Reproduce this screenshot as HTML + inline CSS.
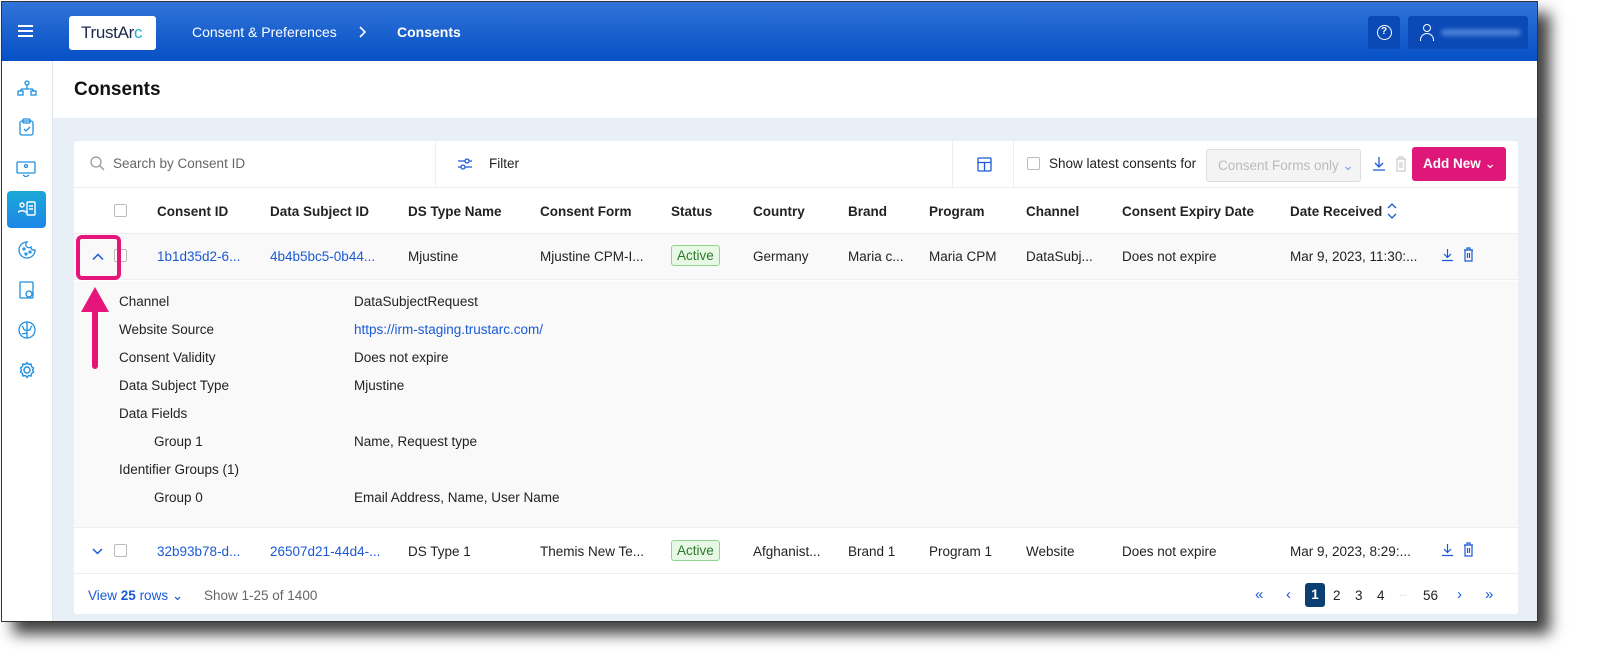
<!DOCTYPE html>
<html><head><meta charset="utf-8"><style>
*{box-sizing:border-box;margin:0;padding:0}
body{width:1600px;height:664px;background:#fff;font-family:"Liberation Sans",sans-serif;font-size:13.5px;color:#222;position:relative;overflow:hidden}
.win{position:absolute;left:1px;top:1px;width:1537px;height:621px;background:#e9eff7;border:1px solid #333;box-shadow:12px 12px 14px rgba(0,0,0,.75);overflow:hidden}
.hdr{position:absolute;left:0;top:0;right:0;height:59px;background:linear-gradient(#3274d8,#0550c6)}
.side{position:absolute;left:0;top:59px;width:51px;bottom:0;background:#fff;border-right:1px solid #e0e6ef}
.titlebar{position:absolute;left:51px;top:59px;right:0;height:57px;background:#fff}
.card{position:absolute;left:72px;top:139px;width:1444px;height:473px;background:#fff;border-radius:3px}
.abs{position:absolute}
.lnk{color:#1a5ad6}
.row{position:absolute;left:0;right:0}
.cell{position:absolute;white-space:nowrap}
.cb{position:absolute;width:13px;height:13px;border:1px solid #bbb;border-radius:2px;background:#fff}
.badge{position:absolute;border:1px solid #8fd48f;background:#e7f8e5;color:#2b7a2b;border-radius:3px;padding:2px 5px;font-size:13.5px}
</style></head><body>
<div class="win">
 <div class="hdr">
  <div class="abs" style="left:16px;top:23px;width:15px;height:2px;background:#fff;box-shadow:0 5px 0 #fff,0 10px 0 #fff"></div>
  <div class="abs" style="left:67px;top:14px;width:87px;height:34px;background:#fff;border-radius:3px;font-size:17px;color:#1b2a4a;padding:7px 0 0 12px;letter-spacing:-.3px">TrustAr<span style="color:#16b5c9">c</span></div>
  <div class="abs" style="left:190px;top:22px;color:#fff;font-size:14px">Consent &amp; Preferences</div>
  <svg class="abs" style="left:357px;top:24px" width="8" height="12" fill="none" stroke="#fff" stroke-width="1.6"><path d="M1 1l5 5-5 5"/></svg>
  <div class="abs" style="left:395px;top:22px;color:#fff;font-size:14px;font-weight:bold">Consents</div>
  <div class="abs" style="left:1366px;top:14px;width:32px;height:33px;background:#0a49b6;border-radius:3px"><div style="margin:9px auto;width:15px;height:15px;border:1.5px solid #fff;border-radius:50%;color:#fff;font-size:10px;text-align:center;line-height:12px;font-weight:bold">?</div></div>
  <div class="abs" style="left:1406px;top:14px;width:120px;height:33px;background:#0a49b6;border-radius:3px">
   <div class="abs" style="left:15px;top:8px;width:8px;height:8px;border:1.5px solid #fff;border-radius:50%"></div>
   <div class="abs" style="left:12px;top:17px;width:14px;height:8px;border:1.5px solid #fff;border-bottom:none;border-radius:7px 7px 0 0"></div>
   <div class="abs" style="left:33px;top:13px;width:80px;height:7px;background:#4a7fd6;border-radius:4px;filter:blur(2px)"></div>
  </div>
 </div>
 <div class="side">
  <svg class="abs" style="left:15px;top:19px" width="20" height="16" fill="none" stroke="#1d8fe0" stroke-width="1.3"><circle cx="10" cy="3" r="2"/><path d="M10 5v4M4 9h12M4 9v2M16 9v2"/><rect x="1" y="11" width="5" height="4"/><rect x="14" y="11" width="5" height="4"/></svg>
  <svg class="abs" style="left:17px;top:57px" width="16" height="18" fill="none" stroke="#1d8fe0" stroke-width="1.3"><rect x="1" y="3" width="13" height="14" rx="2"/><rect x="4" y="1" width="7" height="4" rx="1"/><path d="M5 11l2 2 4-4"/></svg>
  <svg class="abs" style="left:14px;top:100px" width="20" height="16" fill="none" stroke="#1d8fe0" stroke-width="1.3"><rect x="1" y="1" width="18" height="11" rx="1"/><circle cx="10" cy="5" r="1.5"/><path d="M7 14l3 2 3-2"/></svg>
  <div class="abs" style="left:5px;top:130px;width:39px;height:37px;border-radius:4px;background:linear-gradient(#19a9d6,#1f86e8)"><svg style="margin:10px 0 0 11px" width="18" height="16" fill="none" stroke="#fff" stroke-width="1.4"><circle cx="4" cy="4" r="2"/><path d="M0 12c0-3 8-3 8 0"/><rect x="9" y="1" width="8" height="13" rx="1"/><path d="M11 5h4M11 8h4"/></svg></div>
  <svg class="abs" style="left:16px;top:180px" width="18" height="18" fill="none" stroke="#1d8fe0" stroke-width="1.3"><path d="M9 1a8 8 0 1 0 8 8 3 3 0 0 1-4-3 3 3 0 0 1-4-5z"/><circle cx="6" cy="8" r="1"/><circle cx="8" cy="13" r="1"/><circle cx="12" cy="11" r="1"/></svg>
  <svg class="abs" style="left:17px;top:220px" width="16" height="19" fill="none" stroke="#1d8fe0" stroke-width="1.3"><rect x="1" y="1" width="13" height="16" rx="1"/><circle cx="10" cy="13" r="3"/></svg>
  <svg class="abs" style="left:16px;top:260px" width="18" height="18" fill="none" stroke="#1d8fe0" stroke-width="1.3"><circle cx="9" cy="9" r="8"/><path d="M9 1v16M4 5c3 2 0 5 5 4M14 5c-3 2 0 5-5 4M4 13c2-1 3 0 5-1"/></svg>
  <svg class="abs" style="left:16px;top:300px" width="18" height="18" fill="none" stroke="#1d8fe0" stroke-width="1.4"><circle cx="9" cy="9" r="3"/><path d="M9 1.5l1.5 2 2.5-.5.5 2.5 2 1.5-1 2 1 2-2 1.5-.5 2.5-2.5-.5-1.5 2-1.5-2-2.5.5-.5-2.5-2-1.5 1-2-1-2 2-1.5.5-2.5 2.5.5z"/></svg>
 </div>
 <div class="titlebar"><div class="abs" style="left:21px;top:18px;font-size:19px;font-weight:bold;color:#111">Consents</div></div>
 <div class="card">
  <div class="row" style="top:0;height:47px;border-bottom:1px solid #eee">
   <svg class="abs" style="left:16px;top:15px" width="15" height="15" fill="none" stroke="#999" stroke-width="1.3"><circle cx="6" cy="6" r="5"/><path d="M10 10l4 4"/></svg>
   <div class="cell" style="left:39px;top:15px;color:#666">Search by Consent ID</div>
   <div class="abs" style="left:361px;top:0;width:1px;height:47px;background:#eee"></div>
   <svg class="abs" style="left:383px;top:16px" width="16" height="14" fill="none" stroke="#1a5ad6" stroke-width="1.3"><path d="M1 4h14M1 10h14"/><circle cx="10" cy="4" r="2" fill="#fff"/><circle cx="6" cy="10" r="2" fill="#fff"/></svg>
   <div class="cell" style="left:415px;top:15px">Filter</div>
   <div class="abs" style="left:878px;top:0;width:1px;height:47px;background:#eee"></div>
   <svg class="abs" style="left:903px;top:16px" width="15" height="15" fill="none" stroke="#1a5ad6" stroke-width="1.3"><rect x="1" y="1" width="13" height="13" rx="1"/><path d="M1 5.5h13M7.5 5.5v8.5"/></svg>
   <div class="abs" style="left:939px;top:0;width:1px;height:47px;background:#eee"></div>
   <div class="cb" style="left:953px;top:16px"></div>
   <div class="cell" style="left:975px;top:15px">Show latest consents for</div>
   <div class="abs" style="left:1132px;top:8px;width:155px;height:33px;border:1px solid #ddd;background:#f4f4f4;border-radius:3px;color:#bbb;padding:8px 0 0 11px">Consent Forms only <span style="color:#7aa3e5">⌄</span></div>
   <svg class="abs" style="left:1298px;top:15px" width="14" height="16" fill="none" stroke="#1a5ad6" stroke-width="1.3"><path d="M7 1v10M3 7l4 4 4-4M1 14h12"/></svg>
   <svg class="abs" style="left:1321px;top:15px" width="12" height="16" fill="none" stroke="#ccc" stroke-width="1.2"><path d="M1 3h10M4 3V1h4v2M2 3v12h8V3M5 6v6M7 6v6"/></svg>
   <div class="abs" style="left:1338px;top:6px;width:94px;height:34px;background:#e0177a;border-radius:3px;color:#fff;font-weight:bold;padding:9px 0 0 11px">Add New <span style="font-weight:normal">⌄</span></div>
  </div>
  <div class="row" style="top:48px;height:45px;border-bottom:1px solid #eee;font-weight:bold">
   <div class="cb" style="left:40px;top:15px"></div>
   <div class="cell" style="left:83px;top:15px">Consent ID</div>
   <div class="cell" style="left:196px;top:15px">Data Subject ID</div>
   <div class="cell" style="left:334px;top:15px">DS Type Name</div>
   <div class="cell" style="left:466px;top:15px">Consent Form</div>
   <div class="cell" style="left:597px;top:15px">Status</div>
   <div class="cell" style="left:679px;top:15px">Country</div>
   <div class="cell" style="left:774px;top:15px">Brand</div>
   <div class="cell" style="left:855px;top:15px">Program</div>
   <div class="cell" style="left:952px;top:15px">Channel</div>
   <div class="cell" style="left:1048px;top:15px">Consent Expiry Date</div>
   <div class="cell" style="left:1216px;top:15px">Date Received</div>
   <svg class="abs" style="left:1313px;top:13px" width="10" height="18" fill="none" stroke="#1a5ad6" stroke-width="1.3"><path d="M1 6l4-4 4 4M1 12l4 4 4-4"/></svg>
  </div>
  <div class="row" style="top:93px;height:46px;background:#f9f9f9;border-bottom:1px solid #eee">
   <div class="cb" style="left:40px;top:15px"></div>
   <div class="cell lnk" style="left:83px;top:15px">1b1d35d2-6...</div>
   <div class="cell lnk" style="left:196px;top:15px">4b4b5bc5-0b44...</div>
   <div class="cell" style="left:334px;top:15px">Mjustine</div>
   <div class="cell" style="left:466px;top:15px">Mjustine CPM-I...</div>
   <div class="badge" style="left:597px;top:11px">Active</div>
   <div class="cell" style="left:679px;top:15px">Germany</div>
   <div class="cell" style="left:774px;top:15px">Maria c...</div>
   <div class="cell" style="left:855px;top:15px">Maria CPM</div>
   <div class="cell" style="left:952px;top:15px">DataSubj...</div>
   <div class="cell" style="left:1048px;top:15px">Does not expire</div>
   <div class="cell" style="left:1216px;top:15px">Mar 9, 2023, 11:30:...</div>
   <svg class="abs" style="left:1367px;top:14px" width="13" height="14" fill="none" stroke="#1a5ad6" stroke-width="1.2"><path d="M6.5 1v8M3 6l3.5 3.5L10 6M1 12.5h11"/></svg>
   <svg class="abs" style="left:1389px;top:13px" width="11" height="15" fill="none" stroke="#1a5ad6" stroke-width="1.2"><path d="M1 3h9M4 3V1h3v2M2 3v11h7V3M4.5 6v5M6.5 6v5"/></svg>
  </div>
  <div class="row" style="top:140px;height:247px;background:#f9f9f9;border-bottom:1px solid #eee">
   <div class="cell" style="left:45px;top:13px">Channel</div><div class="cell" style="left:280px;top:13px">DataSubjectRequest</div>
   <div class="cell" style="left:45px;top:41px">Website Source</div><div class="cell lnk" style="left:280px;top:41px">https://irm-staging.trustarc.com/</div>
   <div class="cell" style="left:45px;top:69px">Consent Validity</div><div class="cell" style="left:280px;top:69px">Does not expire</div>
   <div class="cell" style="left:45px;top:97px">Data Subject Type</div><div class="cell" style="left:280px;top:97px">Mjustine</div>
   <div class="cell" style="left:45px;top:125px">Data Fields</div>
   <div class="cell" style="left:80px;top:153px">Group 1</div><div class="cell" style="left:280px;top:153px">Name, Request type</div>
   <div class="cell" style="left:45px;top:181px">Identifier Groups (1)</div>
   <div class="cell" style="left:80px;top:209px">Group 0</div><div class="cell" style="left:280px;top:209px">Email Address, Name, User Name</div>
  </div>
  <div class="row" style="top:388px;height:45px;border-bottom:1px solid #eee">
   <svg class="abs" style="left:18px;top:19px" width="11" height="7" fill="none" stroke="#1a5ad6" stroke-width="1.5"><path d="M1 1l4.5 4.5L10 1"/></svg>
   <div class="cb" style="left:40px;top:15px"></div>
   <div class="cell lnk" style="left:83px;top:15px">32b93b78-d...</div>
   <div class="cell lnk" style="left:196px;top:15px">26507d21-44d4-...</div>
   <div class="cell" style="left:334px;top:15px">DS Type 1</div>
   <div class="cell" style="left:466px;top:15px">Themis New Te...</div>
   <div class="badge" style="left:597px;top:11px">Active</div>
   <div class="cell" style="left:679px;top:15px">Afghanist...</div>
   <div class="cell" style="left:774px;top:15px">Brand 1</div>
   <div class="cell" style="left:855px;top:15px">Program 1</div>
   <div class="cell" style="left:952px;top:15px">Website</div>
   <div class="cell" style="left:1048px;top:15px">Does not expire</div>
   <div class="cell" style="left:1216px;top:15px">Mar 9, 2023, 8:29:...</div>
   <svg class="abs" style="left:1367px;top:14px" width="13" height="14" fill="none" stroke="#1a5ad6" stroke-width="1.2"><path d="M6.5 1v8M3 6l3.5 3.5L10 6M1 12.5h11"/></svg>
   <svg class="abs" style="left:1389px;top:13px" width="11" height="15" fill="none" stroke="#1a5ad6" stroke-width="1.2"><path d="M1 3h9M4 3V1h3v2M2 3v11h7V3M4.5 6v5M6.5 6v5"/></svg>
  </div>
  <div class="row" style="top:434px;height:39px">
   <div class="cell lnk" style="left:14px;top:13px">View <b>25</b> rows ⌄</div>
   <div class="cell" style="left:130px;top:13px;color:#666">Show 1-25 of 1400</div>
   <div class="cell lnk" style="left:1181px;top:11px;font-size:15px">«</div>
   <div class="cell lnk" style="left:1212px;top:11px;font-size:15px">‹</div>
   <div class="abs" style="left:1231px;top:8px;width:20px;height:24px;background:#0b3f73;border-radius:3px;color:#fff;font-weight:bold;text-align:center;line-height:24px">1</div>
   <div class="cell" style="left:1259px;top:13px">2</div>
   <div class="cell" style="left:1281px;top:13px">3</div>
   <div class="cell" style="left:1303px;top:13px">4</div>
   <div class="cell" style="left:1325px;top:13px;color:#ccc;font-size:10px">...</div>
   <div class="cell" style="left:1349px;top:13px">56</div>
   <div class="cell lnk" style="left:1383px;top:11px;font-size:15px">›</div>
   <div class="cell lnk" style="left:1411px;top:11px;font-size:15px">»</div>
  </div>
 </div>
 <div class="abs" style="left:74px;top:233px;width:45px;height:45px;border:4px solid #e5157a;border-radius:6px"></div>
 <svg class="abs" style="left:90px;top:251px" width="12" height="8" fill="none" stroke="#1a5ad6" stroke-width="1.5"><path d="M1 6.5L6 1.5l5 5"/></svg>
 <div class="abs" style="left:79px;top:285px;width:0;height:0;border-left:14px solid transparent;border-right:14px solid transparent;border-bottom:25px solid #e5157a"></div>
 <div class="abs" style="left:90px;top:305px;width:6px;height:62px;background:#e5157a;border-radius:3px"></div>
</div>
</body></html>
